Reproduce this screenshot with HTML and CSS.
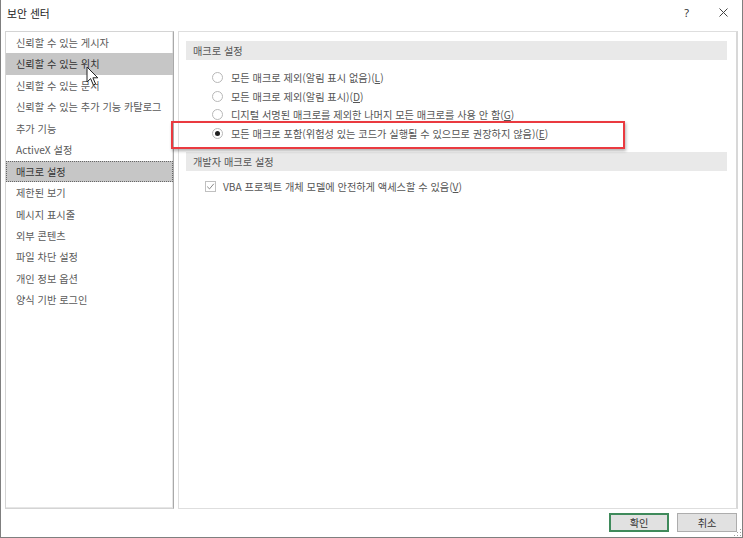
FILE: index.html
```html
<!DOCTYPE html>
<html lang="ko">
<head>
    <meta charset="UTF-8">
    <title>보안 센터</title>
    <link rel="stylesheet" href="styles.css">
</head>
<body>
    <div class="dialog">
        <div class="titlebar">
            <span class="title">보안 센터</span>
            <span class="help">?</span>
            <span class="close">
                <svg width="9" height="9" viewBox="0 0 9 9"><path d="M0.5 0.5 L8.5 8.5 M8.5 0.5 L0.5 8.5" stroke="#444" stroke-width="1" fill="none"/></svg>
            </span>
        </div>

        <div class="main">
            <ul class="nav">
                <li>신뢰할 수 있는 게시자</li>
                <li class="hover">신뢰할 수 있는 위치</li>
                <li>신뢰할 수 있는 문서</li>
                <li>신뢰할 수 있는 추가 기능 카탈로그</li>
                <li>추가 기능</li>
                <li>ActiveX 설정</li>
                <li class="selected">매크로 설정</li>
                <li>제한된 보기</li>
                <li>메시지 표시줄</li>
                <li>외부 콘텐츠</li>
                <li>파일 차단 설정</li>
                <li>개인 정보 옵션</li>
                <li>양식 기반 로그인</li>
            </ul>

            <section class="content">
                <h2 class="group-title">매크로 설정</h2>
                <div class="options">
                    <label class="option"><span class="radio"></span>모든 매크로 제외(알림 표시 없음)(<u>L</u>)</label>
                    <label class="option"><span class="radio"></span>모든 매크로 제외(알림 표시)(<u>D</u>)</label>
                    <label class="option"><span class="radio"></span>디지털 서명된 매크로를 제외한 나머지 모든 매크로를 사용 안 함(<u>G</u>)</label>
                    <label class="option"><span class="radio checked"></span>모든 매크로 포함(위험성 있는 코드가 실행될 수 있으므로 권장하지 않음)(<u>E</u>)</label>
                </div>

                <h2 class="group-title">개발자 매크로 설정</h2>
                <div class="options dev">
                    <label class="option">
                        <span class="checkbox">
                            <svg width="9" height="9" viewBox="0 0 9 9"><path d="M1.2 4.6 L3.5 6.9 L7.8 1.8" stroke="#888" stroke-width="1" fill="none"/></svg>
                        </span>VBA 프로젝트 개체 모델에 안전하게 액세스할 수 있음(<u>V</u>)
                    </label>
                </div>
            </section>
        </div>

        <div class="footer">
            <button class="btn default">확인</button>
            <button class="btn">취소</button>
            <span class="grip"></span>
        </div>

        <div class="highlight"></div>

        <svg class="cursor" width="14" height="22" viewBox="0 0 14 22">
            <path d="M1 1 L1 16 L4.6 12.6 L7.4 19 L9.6 18 L6.9 11.8 L11.8 11.8 Z" fill="#fff" stroke="#222" stroke-width="1" stroke-linejoin="round"/>
        </svg>
    </div>
</body>
</html>
```

FILE: styles.css
```css
* {
    box-sizing: border-box;
    margin: 0;
    padding: 0;
}

body {
    font-family: 'Noto Sans CJK KR', 'Noto Sans', sans-serif;
    font-size: 10.2px;
    color: #555;
    background: #fff;
    width: 743px;
    height: 538px;
    overflow: hidden;
}

.dialog {
    position: relative;
    width: 743px;
    height: 538px;
    border: 1px solid #7f7f7f;
    border-top: none;
    display: flex;
    flex-direction: column;
    background: #fff;
}

.titlebar {
    height: 31px;
    display: flex;
    align-items: center;
    padding: 0 0 6px 6px;
}

.title {
    font-size: 10.8px;
    color: #222;
    flex: 1;
}

.help {
    font-family: 'Noto Sans', sans-serif;
    font-size: 11px;
    color: #333;
    margin-right: 30px;
}

.close {
    display: flex;
    margin-right: 14px;
}

.main {
    display: flex;
    gap: 4px;
    padding: 0 4px;
    height: 478px;
}

.nav {
    list-style: none;
    width: 169px;
    border: 1px solid #d4d4d4;
    border-right-color: #a9a9a9;
    box-shadow: inset -1px -1px 0 #e6e6e6;
}

.nav li {
    height: 21.45px;
    line-height: 21px;
    padding-left: 10px;
    color: #5a5a5a;
    white-space: nowrap;
}

.nav li.hover {
    background: #c6c6c6;
    color: #333;
}

.nav li.selected {
    background: #c6c6c6;
    color: #333;
    outline: 1px dotted #666;
    outline-offset: -1px;
}

.content {
    flex: 1;
    border: 1px solid #dedede;
    border-right: 2px solid #d8d8d8;
    padding: 9px 9px 0 7px;
}

.group-title {
    font-size: 10.2px;
    font-weight: normal;
    color: #555;
    background: #e9e9e9;
    height: 19px;
    line-height: 19px;
    padding-left: 7px;
}

.options {
    padding: 8px 0 9px 26px;
}

.options.dev {
    padding: 6px 0 0 19px;
}

.option {
    display: flex;
    align-items: center;
    height: 18.8px;
    white-space: nowrap;
    color: #555;
}

.option u {
    text-decoration-thickness: 1px;
    text-underline-offset: 1px;
}

.radio {
    width: 11px;
    height: 11px;
    border: 1px solid #b8b8b8;
    border-radius: 50%;
    margin-right: 8px;
    display: flex;
    align-items: center;
    justify-content: center;
}

.radio.checked::after {
    content: "";
    width: 5px;
    height: 5px;
    border-radius: 50%;
    background: #222;
}

.checkbox {
    width: 11px;
    height: 11px;
    border: 1px solid #c0c0c0;
    margin-right: 7px;
    display: flex;
    align-items: center;
    justify-content: center;
}

.footer {
    flex: 1;
    display: flex;
    justify-content: flex-end;
    align-items: flex-start;
    gap: 8px;
    padding: 4px 5px 0 0;
    position: relative;
}

.btn {
    width: 60px;
    height: 19px;
    font-family: inherit;
    font-size: 10.2px;
    color: #333;
    background: #e1e1e1;
    border: 1px solid #adadad;
}

.btn.default {
    border: 2px solid #3f8a5b;
}

.grip {
    position: absolute;
    right: 1px;
    bottom: 1px;
    width: 8px;
    height: 8px;
    background-image: radial-gradient(circle, #a0a0a0 0.8px, transparent 1px);
    background-size: 3px 3px;
    clip-path: polygon(100% 0, 100% 100%, 0 100%);
}

.highlight {
    position: absolute;
    left: 170px;
    top: 121px;
    width: 454px;
    height: 28px;
    border: 2px solid #ea3a40;
    box-shadow: 1px 2px 3px rgba(0, 0, 0, 0.3);
}

.cursor {
    position: absolute;
    left: 85px;
    top: 66px;
}
```
